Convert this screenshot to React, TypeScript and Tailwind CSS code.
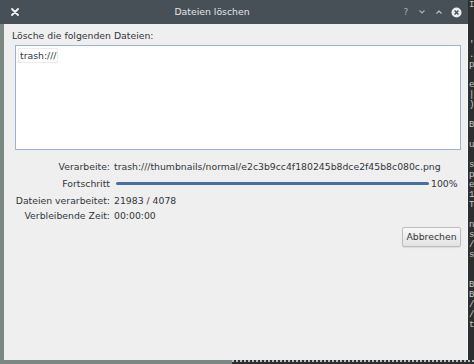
import React from 'react';

const termChars = [
  'I', '', '', '', "'", '.', 'p', '', 'e', '|', ')', '', 'B', '', 'u', '', 's', 'p', 'e', '1',
  'T', '', 'n', 's', '/', 's', '', '', 'B', 'B', '/', '/', 't', '', '', '',
];

const TitleBar: React.FC = () => (
  <div className="h-[24px] bg-[#475057] flex items-center text-[#e3e6e9] shrink-0">
    <div className="w-[28px] flex items-center justify-center pl-[1px]">
      <svg width="8" height="8" viewBox="0 0 8 8">
        <path d="M1 1 L7 7 M7 1 L1 7" stroke="#f2f3f4" strokeWidth="1.8" strokeLinecap="round" />
      </svg>
    </div>
    <div className="flex-1 text-center text-[9.3px] leading-none pr-[6px]">Dateien löschen</div>
    <div className="flex items-center gap-[6px] pr-[6px] text-[#aab1b7]">
      <span className="text-[9px] leading-none w-[8px] text-center">?</span>
      <svg width="8" height="6" viewBox="0 0 8 6" className="ml-[2px]">
        <path d="M1.5 1.5 L4 4 L6.5 1.5" stroke="#aab1b7" strokeWidth="1.1" fill="none" />
      </svg>
      <svg width="8" height="6" viewBox="0 0 8 6" className="ml-[3px]">
        <path d="M1.5 4.5 L4 2 L6.5 4.5" stroke="#c2c8cc" strokeWidth="1.1" fill="none" />
      </svg>
      <svg width="11" height="11" viewBox="0 0 11 11" className="ml-[2px]">
        <circle cx="5.5" cy="5.5" r="5" fill="#eceef0" />
        <path d="M3.6 3.6 L7.4 7.4 M7.4 3.6 L3.6 7.4" stroke="#475057" strokeWidth="1.4" />
      </svg>
    </div>
  </div>
);

export default function App() {
  return (
    <div className="w-[474px] h-[364px] overflow-hidden bg-[#2c2e2f] flex flex-col font-['DejaVu_Sans',sans-serif]">
      <div className="h-[360px] flex shrink-0">
        <div className="w-[468px] flex flex-col">
          <TitleBar />
          <div className="flex-1 flex">
            <div className="w-[4px] bg-[#7b8783]" />
            <div className="flex-1 bg-[#efefef] border-r border-[#f7f7f7] flex flex-col pl-[8px] pr-[6px] pt-[5px] text-[9.3px] text-[#31363b]">
              <div className="leading-[14px] h-[14px]">Lösche die folgenden Dateien:</div>
              <div className="mt-[2px] ml-[3px] w-[446px] h-[105px] bg-white border border-[#9ab5d3] p-[2px]">
                <span className="inline-block leading-[13px] px-[1px] border border-[#ececec]">trash:///</span>
              </div>

              <div className="mt-[8px] grid grid-cols-[98px_1fr] gap-x-[4px]">
                <div className="h-[17px] flex items-center justify-end">Verarbeite:</div>
                <div className="h-[17px] flex items-center whitespace-nowrap">
                  trash:///thumbnails/normal/e2c3b9cc4f180245b8dce2f45b8c080c.png
                </div>

                <div className="h-[17px] flex items-center justify-end">Fortschritt</div>
                <div className="h-[17px] flex items-center">
                  <div className="ml-[2px] w-[313px] h-[3px] rounded-full bg-[#46719f]" />
                  <span className="ml-[2px]">100%</span>
                </div>

                <div className="h-[17px] flex items-center justify-end">Dateien verarbeitet:</div>
                <div className="h-[17px] flex items-center">21983 / 4078</div>

                <div className="h-[14px] flex items-center justify-end">Verbleibende Zeit:</div>
                <div className="h-[14px] flex items-center">00:00:00</div>
              </div>

              <div className="mt-[4px] flex justify-end">
                <button
                  type="button"
                  className="w-[59px] h-[20px] rounded-[2px] border border-[#bcbcbc] bg-gradient-to-b from-[#f8f8f8] to-[#e3e3e3] text-[9.3px] text-[#31363b] leading-none flex items-center justify-center shadow-[0_1px_1px_rgba(0,0,0,0.08)]"
                >
                  Abbrechen
                </button>
              </div>
            </div>
          </div>
        </div>
        <div className="flex-1 flex flex-col pl-[1px] font-['Liberation_Mono',monospace] text-[9px] text-[#c9cdcd]">
          {termChars.map((c, i) => (
            <div key={i} className="h-[10px] leading-[10px]">{c || '\u00a0'}</div>
          ))}
        </div>
      </div>
      <div className="flex-1 flex">
        <div className="w-[232px] bg-[#7b8783]" />
        <div className="flex-1 border-t-2 border-dotted border-[#b9bebe]" />
      </div>
    </div>
  );
}
